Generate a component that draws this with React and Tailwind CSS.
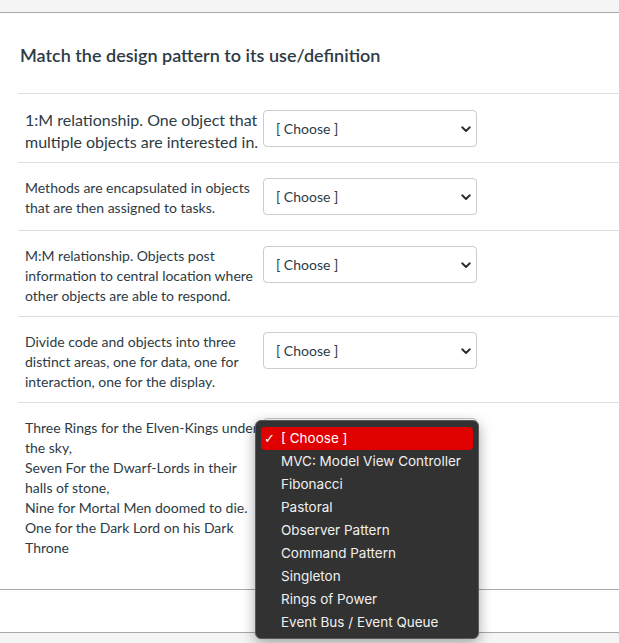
import React from "react";

const lato = { fontFamily: "Lato, 'Noto Sans', sans-serif" };

function Chevron() {
  return (
    <svg width="10" height="7" viewBox="0 0 10 7" className="absolute right-[5px] top-[15px]">
      <path d="M1.2 1.3 L5 5 L8.8 1.3" fill="none" stroke="#2d2d2d" strokeWidth="1.9" strokeLinecap="round" strokeLinejoin="round" />
    </svg>
  );
}

function FakeSelect({ big, open }) {
  return (
    <div
      className={`relative w-[214px] h-[37px] mb-[5px] shrink-0 border border-[#c7cdd1] rounded-[4px] bg-white flex items-center ${
        big ? "mt-[1px]" : ""
      }`}
    >
      {!open && <span className="pl-[12px] text-[14px] leading-[18px] text-[#2d3b45]">[ Choose ]</span>}
      <Chevron />
    </div>
  );
}

function Row({ children, big, last }) {
  return (
    <div className={`flex items-start pl-[7px] pt-[15px] pb-[10px] ${last ? "" : "border-b border-[#dcdfe1]"}`}>
      <div
        className={`w-[238px] shrink-0 text-[#2d3b45] ${big ? "text-[16px] leading-[21.5px]" : "text-[14px] leading-[20px]"}`}
      >
        {children}
      </div>
      <FakeSelect big={big} open={last} />
    </div>
  );
}

const options = [
  "[ Choose ]",
  "MVC: Model View Controller",
  "Fibonacci",
  "Pastoral",
  "Observer Pattern",
  "Command Pattern",
  "Singleton",
  "Rings of Power",
  "Event Bus / Event Queue",
];

export default function App() {
  return (
    <div className="relative w-full h-[643px] bg-white overflow-hidden" style={lato}>
      <div className="h-[13px] bg-[#f5f5f5] border-b border-[#a8a8a8]" />
      <div className="pl-[18px]">
        <h2 className="pl-[2px] pt-[29px] pb-[25px] text-[18px] leading-[26px] font-semibold text-[#2d3b45]">
          Match the design pattern to its use/definition
        </h2>
        <div className="border-t border-[#dcdfe1]">
          <Row big>1:M relationship. One object that multiple objects are interested in.</Row>
          <Row>Methods are encapsulated in objects that are then assigned to tasks.</Row>
          <Row>M:M relationship. Objects post information to central location where other objects are able to respond.</Row>
          <Row>Divide code and objects into three distinct areas, one for data, one for interaction, one for the display.</Row>
          <Row last>
            Three Rings for the Elven-Kings under the sky,
            <br />
            Seven For the Dwarf-Lords in their halls of stone,
            <br />
            Nine for Mortal Men doomed to die.
            <br />
            One for the Dark Lord on his Dark Throne
          </Row>
        </div>
      </div>
      <div className="mt-[21px] h-[44px] border-t border-b border-[#a8a8a8] bg-white" />
      <div className="h-[20px] bg-[#f5f5f5]" />

      <div
        className="absolute left-[255px] top-[420px] w-[224px] h-[219px] rounded-[6px] bg-[#323232] border border-[#5a5a5a] py-[6px] shadow-[0_4px_14px_rgba(0,0,0,0.35)]"
        style={{ fontFamily: "Inter, 'Liberation Sans', sans-serif" }}
      >
        {options.map((o, i) => (
          <div
            key={o}
            className={`mx-[5px] h-[23px] flex items-center text-[13.5px] rounded-[4px] ${
              i === 0 ? "bg-[#e00000] text-white" : "text-[#f0f0f0]"
            }`}
          >
            <span
              className="w-[12px] mr-[5px] ml-[3px] shrink-0 text-[13px] leading-none overflow-hidden"
              style={{ fontFamily: "'DejaVu Sans', sans-serif" }}
            >
              {i === 0 ? "✓" : ""}
            </span>
            <span>{o}</span>
          </div>
        ))}
      </div>
    </div>
  );
}
